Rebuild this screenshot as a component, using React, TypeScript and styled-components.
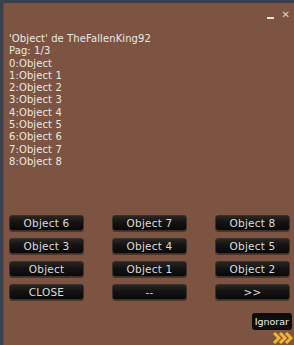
import styled, { createGlobalStyle } from "styled-components";

const GlobalStyle = createGlobalStyle`
  html, body {
    margin: 0;
    padding: 0;
    background: #2e3440;
  }
  body {
    font-family: "DejaVu Sans", "Liberation Sans", sans-serif;
  }
`;

const lines = [
  "'Object' de TheFallenKing92",
  "Pag: 1/3",
  "0:Object",
  "1:Object 1",
  "2:Object 2",
  "3:Object 3",
  "4:Object 4",
  "5:Object 5",
  "6:Object 6",
  "7:Object 7",
  "8:Object 8",
];

const buttons = [
  "Object 6",
  "Object 7",
  "Object 8",
  "Object 3",
  "Object 4",
  "Object 5",
  "Object",
  "Object 1",
  "Object 2",
  "CLOSE",
  "--",
  ">>",
];

export default function App() {
  return (
    <>
      <GlobalStyle />
      <Frame>
        <Window>
          <TitleBar>
            <MinButton />
            <CloseX>✕</CloseX>
          </TitleBar>
          <Body>
            {lines.map((l) => (
              <Line key={l}>{l}</Line>
            ))}
          </Body>
          <ButtonGrid>
            {buttons.map((b) => (
              <MenuButton key={b}>{b}</MenuButton>
            ))}
          </ButtonGrid>
          <Footer>
            <IgnoreButton>Ignorar</IgnoreButton>
          </Footer>
          <Chevrons>
            <svg width="21" height="12" viewBox="0 0 21 12">
              {[0, 6, 12].map((x) => (
                <path
                  key={x}
                  d={`M${x + 1} 1 L${x + 6} 6 L${x + 1} 11`}
                  fill="none"
                  stroke="#f2b530"
                  strokeWidth="3"
                />
              ))}
            </svg>
          </Chevrons>
        </Window>
      </Frame>
    </>
  );
}

const Frame = styled.div`
  width: 294px;
  height: 345px;
  padding-top: 3px;
  padding-left: 3px;
  box-sizing: border-box;
  background: #3b3f4c;
  overflow: hidden;
`;

const Window = styled.div`
  position: relative;
  height: 342px;
  background: #7c5441;
  border-left: 1px solid #5e4a48;
  display: flex;
  flex-direction: column;
  color: #ece8e4;
  font-size: 10px;
`;

const TitleBar = styled.div`
  height: 24px;
  display: flex;
  justify-content: flex-end;
  align-items: center;
  gap: 8px;
  padding-right: 4px;
`;

const MinButton = styled.div`
  width: 7px;
  height: 2px;
  background: #e8e4e0;
  margin-top: 6px;
`;

const CloseX = styled.div`
  font-size: 10px;
  color: #d8d4d0;
  line-height: 10px;
`;

const Body = styled.div`
  padding: 6px 0 0 5px;
  height: 182px;
`;

const Line = styled.div`
  line-height: 12.3px;
  white-space: nowrap;
  letter-spacing: 0.1px;
`;

const ButtonGrid = styled.div`
  display: grid;
  grid-template-columns: repeat(3, 75px);
  column-gap: 28px;
  row-gap: 7px;
  padding-left: 5px;
`;

const MenuButton = styled.div`
  height: 16px;
  border-radius: 3px;
  background: linear-gradient(#2a2624 0%, #141212 45%, #0a0909 100%);
  border: 1px solid #3a302c;
  box-sizing: border-box;
  box-shadow: 0 1px 0 rgba(0, 0, 0, 0.35);
  display: flex;
  align-items: center;
  justify-content: center;
  font-size: 10.5px;
  color: #dcdcdc;
  letter-spacing: 0.2px;
`;

const Footer = styled.div`
  display: flex;
  justify-content: flex-end;
  padding: 13px 2px 0 0;
`;

const IgnoreButton = styled.div`
  height: 17px;
  padding: 0 3px;
  border-radius: 3px;
  background: #0e0d0d;
  display: flex;
  align-items: center;
  font-size: 9.5px;
  color: #f0f0f0;
`;

const Chevrons = styled.div`
  position: absolute;
  right: 0;
  bottom: 1px;
  line-height: 0;
`;
